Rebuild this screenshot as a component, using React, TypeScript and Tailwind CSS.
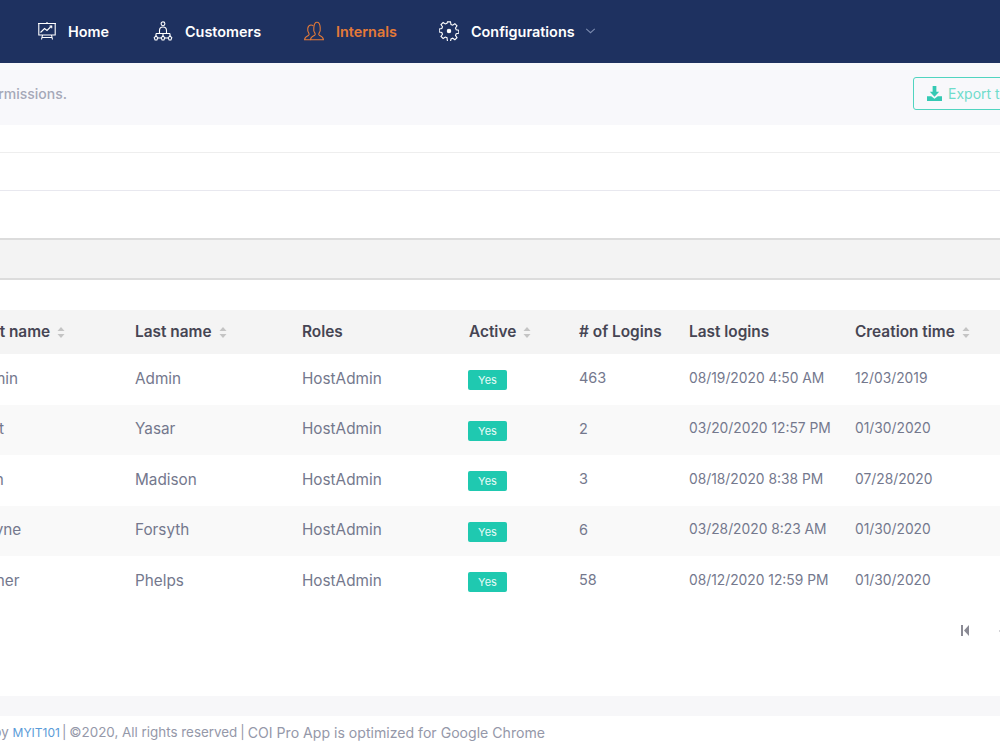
const font = "font-['Inter',sans-serif]"

function HomeIcon() {
  return (
    <svg viewBox="0 0 20 20" className="h-[20px] w-[20px]" fill="none" stroke="currentColor" strokeWidth="1.1">
      <path d="M1 2.500h18M1.800 2.500v11.500h16.400V2.500M10 1v1.500M3.500 11.500l4-4 2.500 2 4.500-4.500" />
      <path d="M12.500 5h2.200v2.200" />
      <path d="M5.500 14l-1 4.500M14.500 14l1 4.500M4.500 16.500h11" />
    </svg>
  )
}

function CustomersIcon() {
  return (
    <svg viewBox="0 0 20 20" className="h-[20px] w-[20px]" fill="none" stroke="currentColor" strokeWidth="1.1">
      <circle cx="10" cy="2.800" r="1.900" />
      <path d="M6.500 12.500v-3a3.500 3.500 0 0 1 7 0v3zM3 12.500h14" />
      <path d="M10 12.500v3M3 12.500v3M17 12.500v3" />
      <path d="M3 15l1.800 1.600L3.900 19H2.100l-.9-2.400zM10 15l1.800 1.600-.9 2.400H9.100l-.9-2.400zM17 15l1.800 1.600-.9 2.400h-1.800l-.9-2.400z" />
      <path d="M4.800 17h3.400M11.800 17h3.400" />
    </svg>
  )
}

function InternalsIcon() {
  return (
    <svg viewBox="0 0 20 20" className="h-[20px] w-[20px]" fill="none" stroke="currentColor" strokeWidth="1.100">
      <path d="M6.500 18.800H.6c0-3 2.200-3.600 4-4.500.6-.4.600-1.400.2-2.200-1-1.300-1.300-3-1-5C4.200 5 5.600 4 7 4c.9 0 1.700.3 2.300 1" />
      <path d="M19.400 18.800H6.500c0-3 2.400-3.500 4.200-4.500.6-.4.600-1.600.1-2.400-1-1.300-1.300-3-1-5.300C10.100 3 11.500 1.200 13 1.200s3 1.800 3.200 5.400c.3 2.300 0 4-1 5.300-.5.800-.5 2 .1 2.400 1.800 1 4.100 1.500 4.100 4.500z" />
    </svg>
  )
}

function GearIcon() {
  return (
    <svg viewBox="0 0 20 20" className="h-[20px] w-[20px]" fill="none" stroke="currentColor" strokeWidth="1.100">
      <path d="M8.500 1h3l.5 2.600 1.700.7 2.200-1.500 2.100 2.100-1.500 2.200.7 1.700 2.600.5v3l-2.600.5-.7 1.700 1.500 2.200-2.100 2.100-2.200-1.500-1.700.7-.5 2.600h-3L8 16.800l-1.700-.7-2.200 1.500L2 15.500 3.500 13.300l-.7-1.700L.2 11.100v-3l2.600-.5.7-1.700L2 3.700 4.100 1.600l2.200 1.500L8 2.400z" transform="translate(0 -.1)" />
      <circle cx="10" cy="10" r="1.700" fill="currentColor" />
    </svg>
  )
}

function SortIcon() {
  return (
    <svg viewBox="0 0 8 11" className="ml-[7px] inline-block h-[11px] w-[8px] text-[#c4c4c4]" fill="currentColor">
      <path d="M4 0l3.500 4H.5zM4 11L.5 7h7z" />
    </svg>
  )
}

const items = [
  { label: "Home", width: "w-[116px]", color: "text-white", icon: <HomeIcon />, iconBox: "w-[31px]" },
  { label: "Customers", width: "w-[151px]", color: "text-white", icon: <CustomersIcon />, iconBox: "w-[32px]" },
  { label: "Internals", width: "w-[135px]", color: "text-[#e57a37]", icon: <InternalsIcon />, iconBox: "w-[32px]" },
  { label: "Configurations", width: "w-[170px]", color: "text-white", icon: <GearIcon />, iconBox: "w-[32px]", chevron: true },
]

const users = [
  { first: "Admin", last: "Admin", logins: "463", lastLogin: "08/19/2020 4:50 AM", created: "12/03/2019" },
  { first: "Matt", last: "Yasar", logins: "2", lastLogin: "03/20/2020 12:57 PM", created: "01/30/2020" },
  { first: "Alan", last: "Madison", logins: "3", lastLogin: "08/18/2020 8:38 PM", created: "07/28/2020" },
  { first: "Wayne", last: "Forsyth", logins: "6", lastLogin: "03/28/2020 8:23 AM", created: "01/30/2020" },
  { first: "Turner", last: "Phelps", logins: "58", lastLogin: "08/12/2020 12:59 PM", created: "01/30/2020" },
]

export default function App() {
  return (
    <div className={`${font} flex h-[750px] w-[1000px] flex-col overflow-hidden bg-white`}>
      <nav className="flex h-[63px] shrink-0 items-center bg-[#1e3160] pl-[37px]">
        {items.map((item) => (
          <div key={item.label} className={`flex items-center ${item.width} ${item.color}`}>
            <span className={`${item.iconBox} shrink-0`}>{item.icon}</span>
            <span className="text-[14.400px] font-semibold">{item.label}</span>
            {item.chevron && (
              <svg viewBox="0 0 12 7" className="ml-[10px] h-[6px] w-[11px] shrink-0 text-[#7d8cb0]" fill="none" stroke="currentColor" strokeWidth="1.200">
                <path d="M1 1l5 4.500L11 1" />
              </svg>
            )}
          </div>
        ))}
      </nav>

      <div className="flex h-[62px] shrink-0 items-center justify-between bg-[#f8f8fb]">
        <div className="flex w-[67px] justify-end overflow-hidden pb-[2px] text-[14px] font-medium whitespace-nowrap text-[#a5a8b8]">
          Users and permissions.
        </div>
        <button className="-mt-[1px] -mr-[60px] flex h-[33px] w-[147px] shrink-0 items-center rounded-[3px] border border-[#50d4c0] bg-transparent pb-[1px] pl-[13px] text-[14px] whitespace-nowrap text-[#6fdccb]">
          <svg viewBox="0 0 16 16" className="mr-[6px] h-[15px] w-[15px] text-[#35c9b4]" fill="currentColor">
            <path d="M6 0h4v6h3l-5 5.500L3 6h3zM0 11h4.500L8 13.500 11.500 11H16v5H0z" />
          </svg>
          Export to Excel
        </button>
      </div>

      <div className="h-[28px] shrink-0 border-b border-[#eeeeee]" />
      <div className="h-[38px] shrink-0 border-b border-[#e8e8ef]" />
      <div className="h-[47px] shrink-0" />
      <div className="h-[42px] shrink-0 border-y-2 border-[#dcdcdc] bg-[#f3f3f3]" />

      <div className="h-[30px] shrink-0" />

      <table className="-ml-[28px] w-[1150px] shrink-0 table-fixed border-collapse text-left">
        <colgroup>
          <col className="w-[163px]" />
          <col className="w-[167px]" />
          <col className="w-[167px]" />
          <col className="w-[110px]" />
          <col className="w-[110px]" />
          <col className="w-[166px]" />
          <col />
        </colgroup>
        <thead>
          <tr className="h-[44px] bg-[#f4f4f4] text-[15.400px] font-semibold text-[#464553]">
            <th className="p-0 pb-[1px] font-semibold whitespace-nowrap">First name<SortIcon /></th>
            <th className="p-0 pb-[1px] font-semibold whitespace-nowrap">Last name<SortIcon /></th>
            <th className="p-0 pb-[1px] font-semibold whitespace-nowrap">Roles</th>
            <th className="p-0 pb-[1px] font-semibold whitespace-nowrap">Active<SortIcon /></th>
            <th className="p-0 pb-[1px] font-semibold whitespace-nowrap"># of Logins</th>
            <th className="p-0 pb-[1px] font-semibold whitespace-nowrap">Last logins</th>
            <th className="p-0 pb-[1px] font-semibold whitespace-nowrap">Creation time<SortIcon /></th>
          </tr>
        </thead>
        <tbody>
          {users.map((user, index) => (
            <tr key={user.last} className={`h-[50.500px] text-[15.300px] text-[#74788d] ${index % 2 === 1 ? "bg-[#f9f9f9]" : "bg-white"}`}>
              <td className="p-0">{user.first}</td>
              <td className="p-0">{user.last}</td>
              <td className="p-0">HostAdmin</td>
              <td className="p-0">
                <span className="-ml-[1px] block h-[20px] w-[39px] translate-y-[1px] rounded-[2px] bg-[#1fc9b0] text-center text-[11px] leading-[20px] text-[#e8fbf7]">Yes</span>
              </td>
              <td className="p-0 pb-[2px] text-[14.500px]">{user.logins}</td>
              <td className="p-0 pb-[2px] text-[13.800px] whitespace-nowrap">{user.lastLogin}</td>
              <td className="p-0 pb-[2px] text-[13.800px]">{user.created}</td>
            </tr>
          ))}
        </tbody>
      </table>

      <div className="flex h-[48px] shrink-0 items-center pl-[961px]">
        <svg viewBox="0 0 8 11" className="h-[11px] w-[8px] shrink-0 text-[#8a8a94]" fill="currentColor">
          <path d="M0 0h2v11H0zM8 0v11L3 5.500z" />
        </svg>
        <svg viewBox="0 0 6 10" className="ml-[30px] h-[10px] w-[6px] shrink-0 text-[#8a8a94]" fill="currentColor">
          <path d="M6 0v10L0 5z" />
        </svg>
      </div>

      <div className="h-[41px] shrink-0" />
      <div className="h-[20px] shrink-0 bg-[#f7f7f9]" />

      <div className="flex h-[35px] w-[545px] shrink-0 items-center justify-end overflow-hidden pb-[1px] text-[13.400px] whitespace-nowrap text-[#9598a9]">
        <span>Developed by&nbsp;</span>
        <span className="text-[12px] text-[#5a9bd8]">MYIT101</span>
        <span className="mr-[3px] ml-[2px]">|</span>
        <span>©2020, All rights reserved</span>
        <span className="mx-[3px]">|</span>
        <span className="text-[14.100px]">COI Pro App is optimized for Google Chrome</span>
      </div>
    </div>
  )
}
